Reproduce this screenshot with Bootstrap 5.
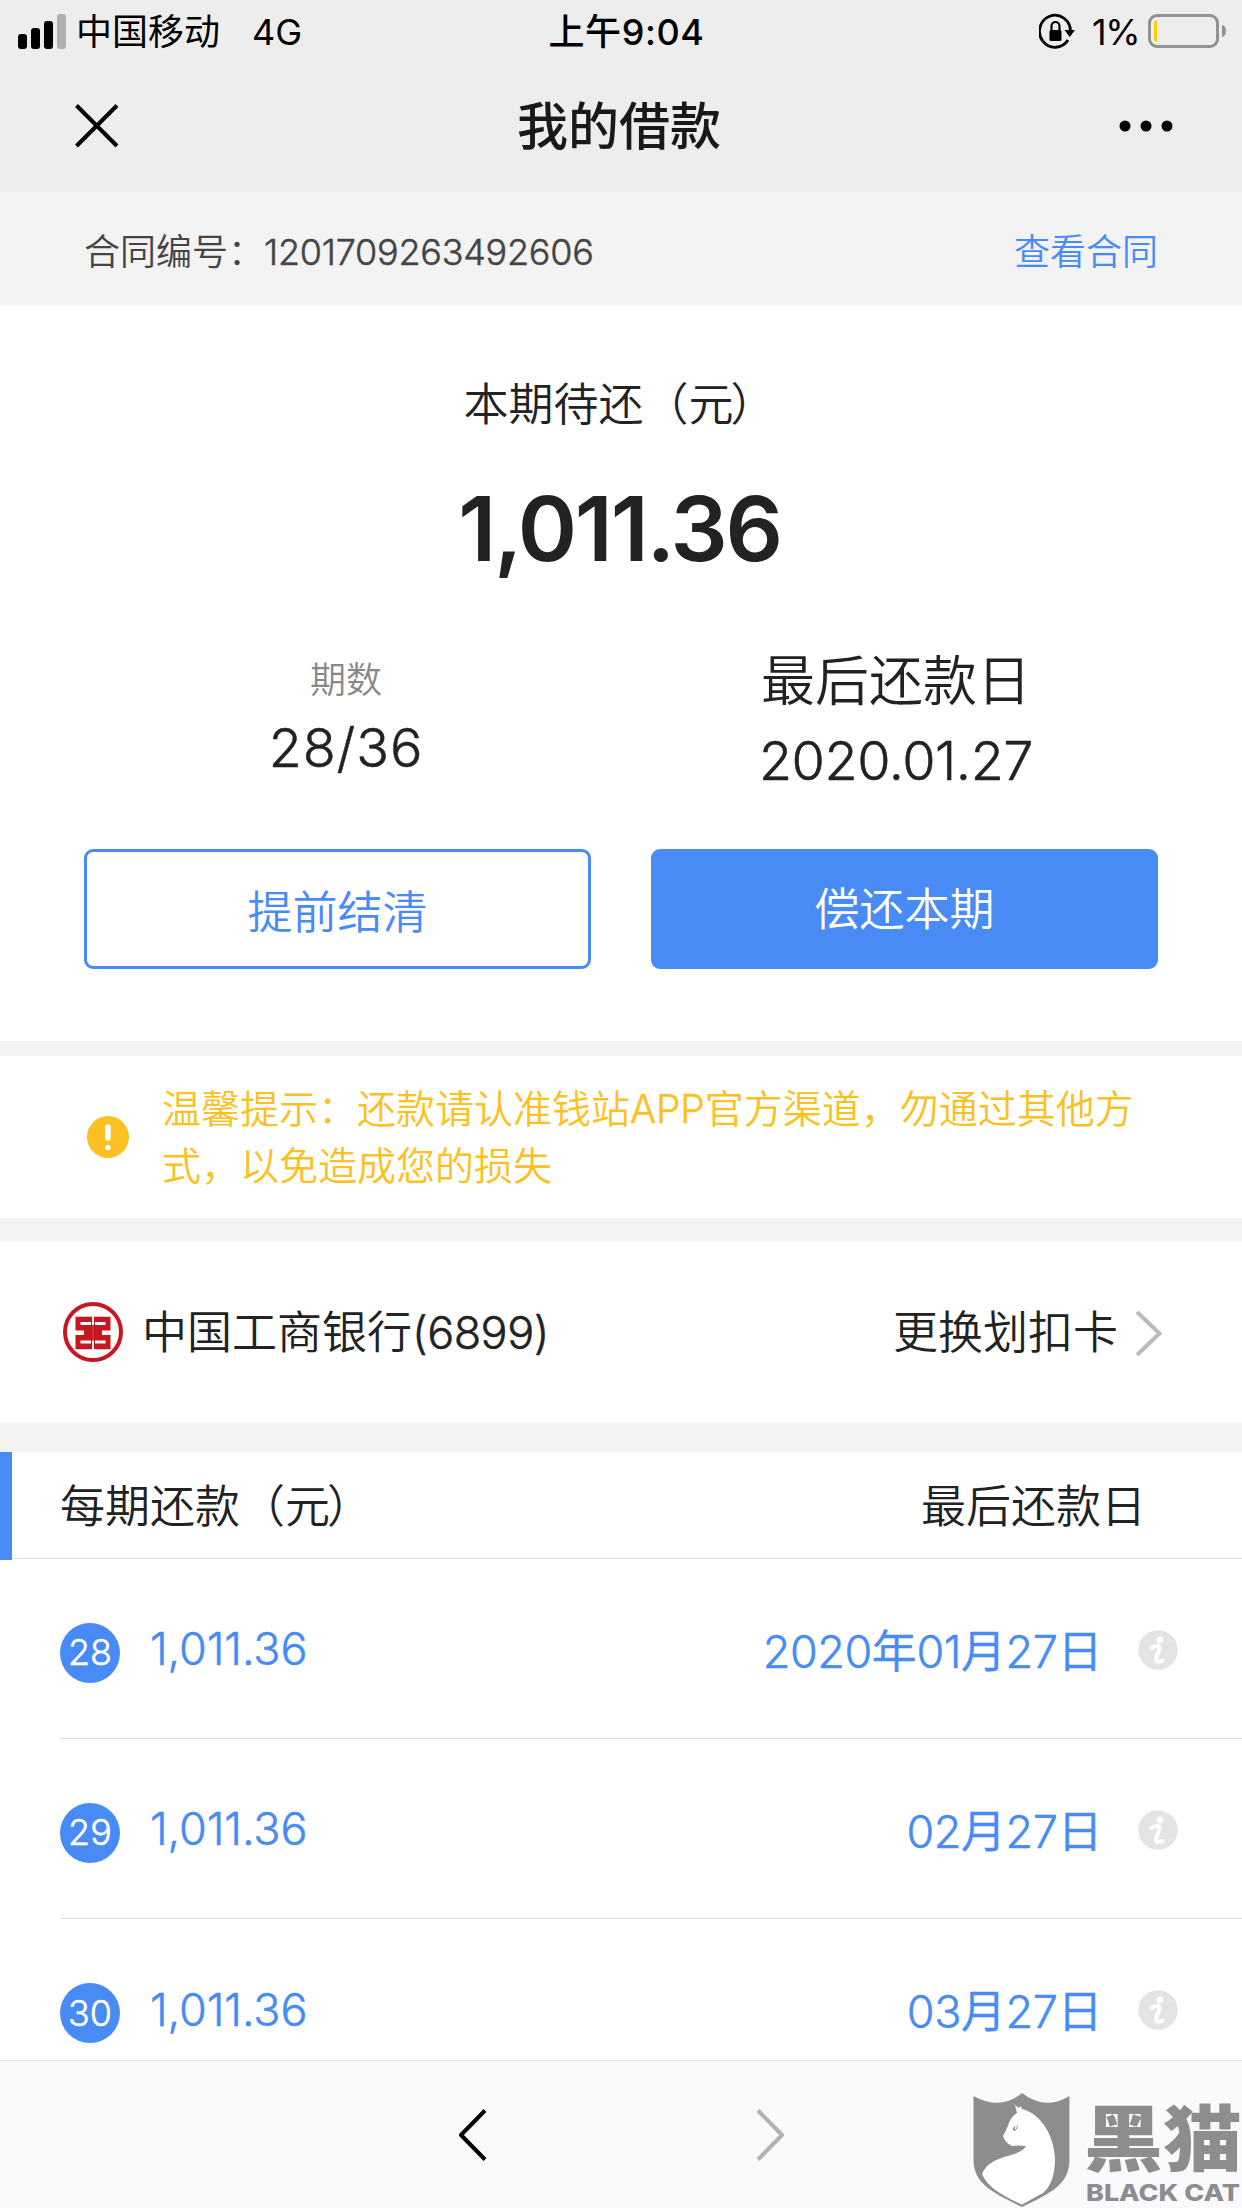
<!DOCTYPE html>
<html lang="zh-CN">
<head>
<meta charset="utf-8">
<meta name="viewport" content="width=device-width, initial-scale=1">
<title>我的借款</title>
<link href="https://cdn.jsdelivr.net/npm/bootstrap@5.3.0/dist/css/bootstrap.min.css" rel="stylesheet">
<style>
  :root { --blue: #488bf5; --ink: #222; --line: #e2e2e2; }
  body { font-family: Inter, "Noto Sans CJK SC", sans-serif; color: var(--ink); background: #fff; line-height: 1; font-size: 45px; font-weight: 350; }
  svg { display: block; flex: none; }
  .screen { width: 1242px; height: 2208px; }
  .topbar { height: 192px; background: #ededed; color: #000; }
  .status { height: 62px; padding: 1px 15px 0 18px; font-size: 36px; font-weight: 400; }
  .status > div { flex: 1 1 0; }
  .clock { font-weight: 500; letter-spacing: .6px; padding-left: 8px; }
  .titlebar { height: 130px; padding: 0 69px 2px 75px; }
  .titlebar h1 { font-size: 51px; font-weight: 500; color: #191919; line-height: 1; }
  .contract { height: 114px; padding: 6px 84px 0; background: #f3f3f3; font-size: 36px; color: #444; }
  .contract .num { letter-spacing: -.25px; }
  .num, .due-term, .last-date, .tail, .sum, .date, .dot-no, .latin { -webkit-text-stroke: .5px currentColor; }
  .blue { color: var(--blue); text-decoration: none; }
  .close-paren { margin-left: -3px; }
  .summary { height: 735px; padding: 69px 84px 0; }
  .due-label { line-height: 60px; padding-right: 3px; }
  .due-sum { font-size: 90px; font-weight: 600; line-height: 100px; margin-top: 44px; letter-spacing: -2.300px; padding-right: 3px; }
  .facts { height: 270px; gap: 26px; }
  .facts .big { font-size: 54px; line-height: 60px; }
  .due-term { letter-spacing: .9px; }
  .term-label { font-size: 36px; line-height: 50px; color: #888; margin-top: 76px; margin-bottom: 13px; }
  .last-label { margin-top: 73px; margin-bottom: 19px; }
  .last-date { letter-spacing: -.45px; }
  .actions { gap: 60px; }
  .actions .btn { height: 120px; flex: 1; font-size: 45px; font-weight: 350; line-height: 1; border: 3px solid var(--blue); border-radius: 9px; padding: 0; }
  .actions .btn-line { color: var(--blue); background: #fff; padding-top: 6px; }
  .actions .btn-full { color: #fff; background: var(--blue); padding-top: 1px; }
  .strip { background: #f3f3f3; }
  .notice { height: 162px; padding: 0 84px 0 87px; color: #fbc123; font-size: 39px; line-height: 57px; gap: 33px; }
  .notice .latin { letter-spacing: -.2px; }
  .bank { height: 180px; padding: 0 78px 0 63px; }
  .bank .tail { letter-spacing: -.55px; }
  .list-head { height: 108px; padding-right: 96px; border-left: 12px solid var(--blue); padding-left: 48px; background: linear-gradient(var(--line), var(--line)) 0 106px / 100% 1px no-repeat; }
  .plan { height: 500px; }
  .plan-row { height: 180px; margin-left: 60px; padding: 8px 64px 0 0; color: var(--blue); border-bottom: 1px solid var(--line); margin-top: -1px; }
  .plan-row + .plan-row { margin-top: 0; }
  .dot-no { width: 60px; height: 60px; border-radius: 50%; background: var(--blue); color: #fff; font-size: 36px; margin-right: 30px; padding-bottom: 1px; }
  .sum { padding-bottom: 8px; letter-spacing: -.1px; }
  .date { padding-bottom: 3px; margin-right: 36px; letter-spacing: -.45px; }
  .info { margin-bottom: 6px; }
  .toolbar { height: 148px; background: #fafafc; border-top: 1px solid var(--line); padding-left: 458px; }
</style>
</head>
<body>
<div class="screen d-flex flex-column overflow-hidden position-relative">
  <header class="topbar">
    <div class="status d-flex align-items-center">
      <div class="d-flex align-items-center">
        <svg width="49" height="36" viewBox="0 0 49 36"><g><rect x="0" y="20" width="9" height="15" rx="3"/><rect x="13" y="14" width="9" height="21" rx="3"/><rect x="26" y="7" width="9" height="28" rx="3"/><rect x="39" y="0" width="9" height="35" rx="3" fill="#b1b1b1"/></g></svg>
        <span style="margin-left:9px">中国移动</span><span style="margin-left:32px">4G</span>
      </div>
      <div class="clock text-center">上午9:04</div>
      <div class="d-flex align-items-center justify-content-end">
        <svg width="36" height="38" viewBox="0 0 36 38"><path d="M29 27A15.500 16 0 1 1 31.500 18" fill="none" stroke="#000" stroke-width="2.800"/><path d="M25.500 17H36L30.800 24Z"/><rect x="10.500" y="17" width="12" height="11" rx="1.500"/><path d="M12.500 18V13a4 4 0 0 1 8 0V18" fill="none" stroke="#000" stroke-width="2.200"/></svg>
        <span style="margin:0 9px 0 17px;letter-spacing:-1.500px">1%</span>
        <svg style="margin-bottom:2px" width="79" height="36" viewBox="0 0 79 36"><rect x="1.500" y="2.500" width="68" height="31" rx="7.500" fill="none" stroke="#919191" stroke-width="3"/><path d="M9 7V29Q6 28 6 25V11Q6 8 9 7Z" fill="#fc0"/><path d="M74 12Q78 13 78 18T74 24Z" fill="#919191"/></svg>
      </div>
    </div>
    <div class="titlebar d-flex align-items-center justify-content-between">
      <svg width="44" height="44" viewBox="0 0 44 44"><path d="M1.500 1.500L42 42M42 1.500L1.500 42" stroke="#000" stroke-width="4" fill="none"/></svg>
      <h1 class="m-0">我的借款</h1>
      <svg width="54" height="12" viewBox="0 0 54 12"><circle cx="6" cy="6" r="5.500"/><circle cx="27" cy="6" r="5.500"/><circle cx="48" cy="6" r="5.500"/></svg>
    </div>
  </header>

  <section class="contract d-flex align-items-center justify-content-between">
    <div>合同编号：<span class="num">1201709263492606</span></div>
    <a class="blue" href="#">查看合同</a>
  </section>

  <section class="summary text-center">
    <div class="due-label">本期待还（元<span class="close-paren">）</span></div>
    <div class="due-sum">1,011.36</div>
    <div class="facts d-flex">
      <div class="flex-fill w-50"><div class="term-label">期数</div><div class="big due-term">28/36</div></div>
      <div class="flex-fill w-50"><div class="big last-label">最后还款日</div><div class="big last-date">2020.01.27</div></div>
    </div>
    <div class="actions d-flex">
      <button class="btn btn-line" type="button">提前结清</button>
      <button class="btn btn-full" type="button">偿还本期</button>
    </div>
  </section>

  <div class="strip" style="height:15px"></div>
  <section class="notice d-flex align-items-center">
    <svg width="42" height="42" viewBox="0 0 42 42"><circle cx="21" cy="21" r="21" fill="#fbc123"/><path d="M21 11V22" stroke="#fff" stroke-width="5.500" stroke-linecap="round"/><circle cx="21" cy="31.500" r="2.700" fill="#fff"/></svg>
    <div class="text-nowrap">温馨提示：还款请认准钱站<span class="latin">APP</span>官方渠道，勿通过其他方<br>式，以免造成您的损失</div>
  </section>
  <div class="strip" style="height:24px"></div>

  <section class="bank d-flex align-items-center">
    <svg width="60" height="60" viewBox="0 0 60 60"><circle cx="30" cy="30" r="28" fill="none" stroke="#c7161d" stroke-width="4"/><path d="M12.500 14.700H47.500V28.500H39V33H47.500V47.300H12.500V33H21V28.500H12.500Z" fill="#c7161d"/><path d="M17.500 21.500H28M32 21.500H42.500M17.500 40H28M32 40H42.500" stroke="#fff" stroke-width="2.800"/><path d="M30 14V23M30 38.500V48" stroke="#fff" stroke-width="2"/><path d="M30 23V38.500" stroke="#d8484d" stroke-width="1"/></svg>
    <span style="margin-left:19px">中国工商银行<span class="tail">(6899)</span></span>
    <span class="ms-auto">更换划扣卡</span>
    <svg style="margin-left:17px" width="29" height="48" viewBox="0 0 29 48"><path d="M2 4L24.500 25.500L2 47" fill="none" stroke="#bbb" stroke-width="4"/></svg>
  </section>
  <div class="strip" style="height:30px"></div>

  <section>
    <div class="list-head d-flex align-items-center justify-content-between"><span>每期还款（元<span class="close-paren">）</span></span><span>最后还款日</span></div>
    <div class="plan">
      <div class="plan-row d-flex align-items-center">
        <span class="dot-no d-flex align-items-center justify-content-center">28</span><span class="sum">1,011.36</span>
        <span class="date ms-auto">2020年01月27日</span>
        <svg class="info" width="40" height="40" viewBox="0 0 40 40"><circle cx="20" cy="20" r="19.800" fill="#e4e4e4"/><circle cx="22" cy="10" r="3.400" fill="#fff"/><path d="M13.500 18Q20 14.500 21.500 17.500C22 20 17 29 18 31Q19 32.500 24.500 31" fill="none" stroke="#fff" stroke-width="4" stroke-linecap="round"/></svg>
      </div>
      <div class="plan-row d-flex align-items-center">
        <span class="dot-no d-flex align-items-center justify-content-center">29</span><span class="sum">1,011.36</span>
        <span class="date ms-auto">02月27日</span>
        <svg class="info" width="40" height="40" viewBox="0 0 40 40"><circle cx="20" cy="20" r="19.800" fill="#e4e4e4"/><circle cx="22" cy="10" r="3.400" fill="#fff"/><path d="M13.500 18Q20 14.500 21.500 17.500C22 20 17 29 18 31Q19 32.500 24.500 31" fill="none" stroke="#fff" stroke-width="4" stroke-linecap="round"/></svg>
      </div>
      <div class="plan-row d-flex align-items-center border-0">
        <span class="dot-no d-flex align-items-center justify-content-center">30</span><span class="sum">1,011.36</span>
        <span class="date ms-auto">03月27日</span>
        <svg class="info" width="40" height="40" viewBox="0 0 40 40"><circle cx="20" cy="20" r="19.800" fill="#e4e4e4"/><circle cx="22" cy="10" r="3.400" fill="#fff"/><path d="M13.500 18Q20 14.500 21.500 17.500C22 20 17 29 18 31Q19 32.500 24.500 31" fill="none" stroke="#fff" stroke-width="4" stroke-linecap="round"/></svg>
      </div>
    </div>
  </section>

  <footer class="toolbar d-flex align-items-center position-absolute bottom-0 start-0 w-100">
    <svg width="30" height="54" viewBox="0 0 30 54"><path d="M27 2.500L3 27L27 51.500" fill="none" stroke="#000" stroke-width="4" stroke-linejoin="round"/></svg>
    <svg style="margin-left:267px" width="30" height="54" viewBox="0 0 30 54"><path d="M3 2.500L27 27L3 51.500" fill="none" stroke="#b2b2b2" stroke-width="4" stroke-linejoin="round"/></svg>
    <svg class="ms-auto" width="270" height="147" viewBox="972 2061 270 147">
      <path d="M973.500 2096Q1001 2111 1022 2093Q1045 2111 1069.500 2096V2160C1069 2184 1053 2192 1022 2207C992 2192 974 2184 973.500 2160Z" fill="#8f8c8f"/>
      <path d="M1015 2105L1019 2108L1021 2106L1022 2109C1044 2115 1054 2139 1055 2158C1055 2177 1050 2187 1043 2193L1022 2204.500C1003 2196 987 2187 982 2174C991 2153 1018 2159 1026 2146Q1018 2145 1012 2146Q1005 2143 1003 2136C1006 2131 1008 2125 1010 2121Q1012 2116 1017 2113Z" fill="#fff"/>
      <path d="M1012.500 2128.500Q1015 2125 1018 2125.500Q1017.500 2130 1014 2131Z" fill="#8f8c8f"/><path d="M1015 2129L1016.500 2126" stroke="#fff" stroke-width="1.500"/>
      <g fill="#8f8c8f"><text x="1084" y="2164.500" font-family="Noto Sans CJK SC" font-size="72" font-weight="900" textLength="158" lengthAdjust="spacingAndGlyphs">黑猫</text>
      <text x="1086" y="2201" font-family="Inter" font-size="23.500" font-weight="800" textLength="154" lengthAdjust="spacingAndGlyphs">BLACK CAT</text></g>
    </svg>
  </footer>
</div>
<script src="https://cdn.jsdelivr.net/npm/bootstrap@5.3.0/dist/js/bootstrap.bundle.min.js"></script>
</body>
</html>
